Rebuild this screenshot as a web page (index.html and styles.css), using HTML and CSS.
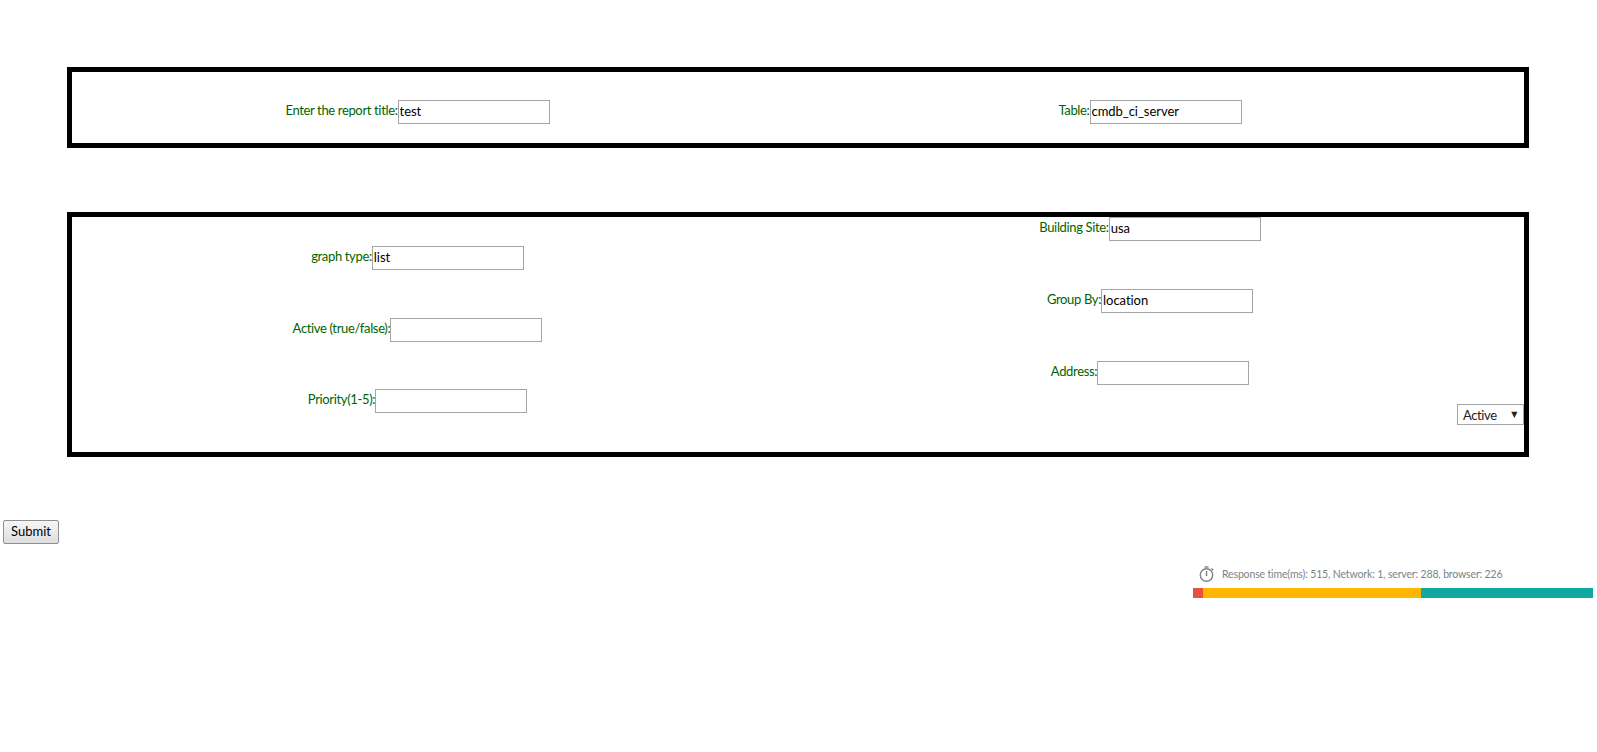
FILE: index.html
```html
<!DOCTYPE html>
<html lang="en">
<head>
    <meta charset="UTF-8">
    <title>Report</title>
    <link rel="stylesheet" href="styles.css">
</head>
<body>
    <form class="report-form">
        <div class="box box-top">
            <div class="column">
                <div class="field"><label>Enter the report title:</label><input type="text" class="input-field" value="test"></div>
            </div>
            <div class="column">
                <div class="field"><label>Table:</label><input type="text" class="input-field" value="cmdb_ci_server"></div>
            </div>
        </div>

        <div class="box box-filters">
            <div class="column column-left">
                <div class="field"><label>graph type:</label><input type="text" class="input-field" value="list"></div>
                <div class="field"><label>Active (true/false):</label><input type="text" class="input-field"></div>
                <div class="field"><label>Priority(1-5):</label><input type="text" class="input-field"></div>
            </div>
            <div class="column column-right">
                <div class="field"><label>Building Site:</label><input type="text" class="input-field" value="usa"></div>
                <div class="field"><label>Group By:</label><input type="text" class="input-field" value="location"></div>
                <div class="field"><label>Address:</label><input type="text" class="input-field"></div>
                <div class="select-row">
                    <div class="select-box"><span>Active</span><span class="arrow">&#9660;</span></div>
                </div>
            </div>
        </div>

        <button type="button" class="button">Submit</button>
    </form>

    <div class="timing">
        <div class="timing-text">
            <svg class="timer-icon" width="16" height="16" viewBox="0 0 16 16" fill="none" stroke="#7d8288">
                <circle cx="7.5" cy="9" r="6.2" stroke-width="1.4"/>
                <path d="M7.5 5V10" stroke-width="1.5"/>
                <path d="M5.5 1H9.5" stroke-width="1.4"/>
                <path d="M12.5 2.6L14.2 4.3" stroke-width="1.4"/>
            </svg>
            <span>Response time(ms): 515, Network: 1, server: 288, browser: 226</span>
        </div>
        <div class="timing-bar">
            <div class="bar-network"></div>
            <div class="bar-server"></div>
            <div class="bar-browser"></div>
        </div>
    </div>
</body>
</html>
```

FILE: styles.css
```css
body {
    font-family: 'Lato', sans-serif;
    font-size: 13px;
    margin: 0;
    background-color: white;
    color: black;
}

.report-form {
    padding-top: 67px;
}

.box {
    display: grid;
    grid-template-columns: 691px 748px;
    column-gap: 13px;
    width: 1452px;
    margin-left: 67px;
    border: 5px solid black;
}

.box-top {
    padding-top: 28px;
    height: 43px;
}

.box-filters {
    margin-top: 64px;
    height: 235px;
}

.column {
    text-align: center;
}

.column-left {
    padding-top: 29px;
}

.column-left .field {
    margin-bottom: 47.6px;
}

.field {
    height: 24px;
    margin-bottom: 48px;
    display: flex;
    justify-content: center;
    align-items: flex-start;
}

.field label {
    color: #006400;
    line-height: 20px;
    letter-spacing: -0.35px;
}

.input-field {
    width: 152px;
    height: 24px;
    box-sizing: border-box;
    border: 1px solid #a6a6a6;
    padding: 0 1px 2px;
    margin: 0;
    font-family: inherit;
    font-size: 13px;
    letter-spacing: -0.05px;
    color: black;
    background: white;
}

.select-row {
    display: flex;
    justify-content: flex-end;
    margin-top: -29px;
}

.select-box {
    width: 67px;
    height: 21px;
    box-sizing: border-box;
    border: 1px solid #a6a6a6;
    padding: 0 6px 0 5px;
    display: flex;
    justify-content: space-between;
    align-items: center;
    font-size: 13px;
    letter-spacing: -0.4px;
    color: #222;
}

.arrow {
    font-family: 'DejaVu Sans', sans-serif;
    font-size: 8px;
}

.button {
    display: block;
    margin: 63px 0 0 3px;
    width: 56px;
    height: 24px;
    padding: 0 0 2px;
    border: 1px solid #8f8f8f;
    border-radius: 2px;
    background: linear-gradient(#f6f6f6, #dedede);
    font-family: inherit;
    font-size: 13px;
    color: black;
}

.timing {
    margin: 17px 0 0 1193px;
    width: 400px;
}

.timing-text {
    display: flex;
    align-items: center;
    box-sizing: border-box;
    height: 24px;
    padding: 2px 0 0 6px;
    font-size: 10.5px;
    letter-spacing: -0.15px;
    color: #7d8288;
}

.timer-icon {
    margin-right: 7px;
}

.timing-bar {
    display: flex;
    height: 10px;
    margin-top: 3px;
}

.bar-network {
    width: 10px;
    background-color: #e5533d;
}

.bar-server {
    width: 218px;
    background-color: #ffb600;
}

.bar-browser {
    flex: 1;
    background-color: #11a8a1;
}
```
